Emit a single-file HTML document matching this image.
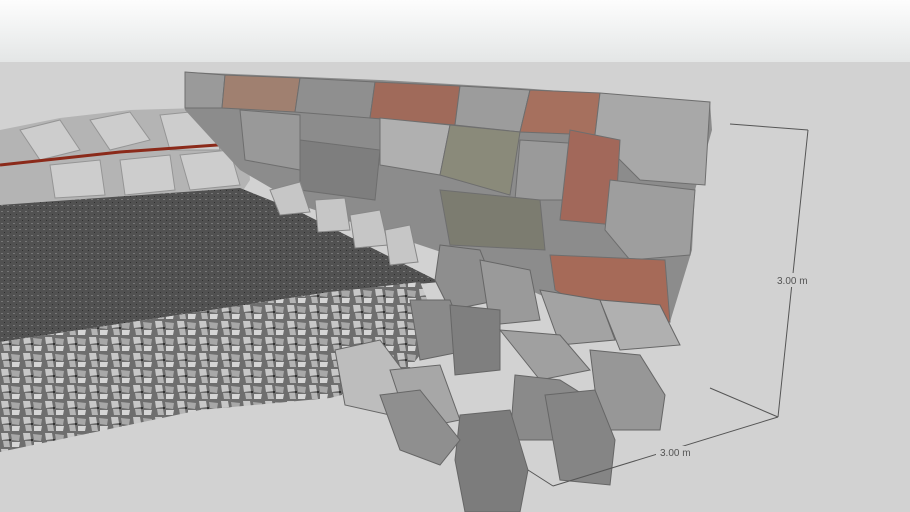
<!DOCTYPE html>
<html><head><style>
html,body{margin:0;padding:0;width:910px;height:512px;overflow:hidden;background:#d2d2d2}
svg{display:block}
</style></head><body>
<svg width="910" height="512" viewBox="0 0 910 512" xmlns="http://www.w3.org/2000/svg">
<defs>
<linearGradient id="sky" x1="0" y1="0" x2="0" y2="1"><stop offset="0" stop-color="#fdfdfd"/><stop offset="1" stop-color="#e4e6e6"/></linearGradient>
<pattern id="grav" width="22" height="16" patternUnits="userSpaceOnUse">
<rect width="22" height="16" fill="#6e6e6e"/>
<path d="M1 1l7 0 1 6-7 1z" fill="#c8c8c8"/><path d="M11 2l9 1-1 6-7-1z" fill="#a8a8a8"/>
<path d="M3 9l6 0 1 6-6 0z" fill="#b5b5b5"/><path d="M12 10l8 0-1 5-7 0z" fill="#d5d5d5"/>
<path d="M9 7l2 0 0 2-2 0z" fill="#333"/>
</pattern>
<pattern id="road" width="6" height="6" patternUnits="userSpaceOnUse">
<rect width="6" height="6" fill="#515151"/><rect x="1" y="1" width="2" height="1" fill="#767676"/><rect x="4" y="4" width="1" height="1" fill="#303030"/>
</pattern>
</defs>
<rect x="0" y="0" width="910" height="62" fill="url(#sky)"/>
<rect x="0" y="62" width="910" height="450" fill="#d2d2d2"/>
<!-- left back stones -->
<polygon points="0,130 60,118 130,110 200,108 245,120 250,180 240,195 0,205" fill="#b4b4b4"/>
<g fill="#cdcdcd" stroke="#959595" stroke-width="1">
<polygon points="20,130 60,120 80,150 40,160"/><polygon points="90,120 130,112 150,140 110,150"/>
<polygon points="160,115 210,110 220,150 170,150"/><polygon points="50,165 100,160 105,195 55,198"/>
<polygon points="120,160 170,155 175,190 125,195"/><polygon points="180,155 230,150 240,185 190,190"/>
</g>
<path d="M0 165 L120 152 L245 143" stroke="#8b2a1a" stroke-width="3" fill="none"/>
<!-- wall -->
<polygon points="185,72 380,80 520,88 710,102 712,130 695,190 692,250 670,322 620,330 450,255 300,205 240,170 185,110" fill="#8c8c8c"/>
<g stroke="#6e6e6e" stroke-width="1">
<polygon points="185,72 225,75 222,108 185,108" fill="#9a9a9a"/>
<polygon points="225,75 300,78 295,112 222,108" fill="#a08070"/>
<polygon points="300,78 375,82 370,118 295,112" fill="#8f8f8f"/>
<polygon points="375,82 460,86 455,125 370,118" fill="#a06a5a"/>
<polygon points="460,86 530,90 520,132 455,125" fill="#9c9c9c"/>
<polygon points="530,90 600,93 595,135 520,132" fill="#a6705e"/>
<polygon points="600,93 710,102 705,185 640,180 595,135" fill="#a8a8a8"/>
<polygon points="380,118 450,125 440,175 380,165" fill="#b0b0b0"/>
<polygon points="450,125 520,132 510,195 440,175" fill="#8a8a7a"/>
<polygon points="520,140 600,145 610,200 515,200" fill="#9a9a9a"/>
<polygon points="570,130 620,140 615,225 560,220" fill="#a2685a"/>
<polygon points="610,180 695,190 690,255 630,260 605,230" fill="#9e9e9e"/>
<polygon points="550,255 665,260 670,322 620,328 555,290" fill="#a66a58"/>
<polygon points="300,140 380,150 375,200 300,190" fill="#7e7e7e"/>
<polygon points="240,110 300,115 300,170 245,160" fill="#999"/>
<polygon points="440,190 540,200 545,250 450,245" fill="#7c7c70"/>
</g>
<!-- road -->
<polygon points="0,205 240,188 300,212 440,282 330,292 0,342" fill="url(#road)"/>
<!-- gravel -->
<polygon points="0,342 330,292 420,282 440,330 400,380 330,398 200,410 0,452" fill="url(#grav)"/>
<!-- rocks row on road edge -->
<g fill="#c6c6c6" stroke="#888">
<polygon points="270,190 300,182 310,212 280,215"/><polygon points="315,200 345,198 350,230 318,232"/>
<polygon points="350,215 380,210 388,245 355,248"/><polygon points="385,230 410,225 418,262 390,265"/>
</g>
<!-- front rocks -->
<g stroke="#666">
<polygon points="440,245 480,250 500,300 450,310 435,280" fill="#8e8e8e"/>
<polygon points="480,260 530,270 540,320 490,325" fill="#9a9a9a"/>
<polygon points="540,290 600,300 615,340 560,345" fill="#a3a3a3"/>
<polygon points="600,300 660,305 680,345 620,350" fill="#b0b0b0"/>
<polygon points="410,300 450,300 470,350 420,360" fill="#8a8a8a"/>
<polygon points="450,305 500,310 500,370 455,375" fill="#7f7f7f"/>
<polygon points="335,350 380,340 410,380 390,415 345,405" fill="#bdbdbd"/>
<polygon points="390,370 440,365 460,420 410,430" fill="#a7a7a7"/>
<polygon points="500,330 560,335 590,370 540,380" fill="#a0a0a0"/>
<polygon points="590,350 640,355 665,395 660,430 600,430" fill="#979797"/>
<polygon points="515,375 560,380 600,405 570,440 510,440" fill="#8a8a8a"/>
<polygon points="460,415 510,410 528,470 520,512 465,512 455,460" fill="#7c7c7c"/>
<polygon points="380,395 420,390 460,440 440,465 400,450" fill="#8f8f8f"/>
<polygon points="545,395 595,390 615,440 610,485 560,480" fill="#858585"/>
</g>
<!-- dimensions -->
<g stroke="#555" stroke-width="1" fill="none">
<line x1="730" y1="124" x2="808" y2="130"/>
<line x1="808" y1="130" x2="778" y2="417"/>
<line x1="710" y1="388" x2="778" y2="417"/>
<line x1="778" y1="417" x2="553" y2="486"/>
<line x1="528" y1="470" x2="553" y2="486"/>
</g>
<rect x="773" y="273" width="38" height="14" fill="#d2d2d2"/>
<text x="777" y="284" font-family="Liberation Sans, sans-serif" font-size="10" fill="#555">3.00 m</text>
<rect x="656" y="446" width="38" height="13" fill="#d2d2d2"/>
<text x="660" y="456" font-family="Liberation Sans, sans-serif" font-size="10" fill="#555">3.00 m</text>
</svg>
</body></html>
